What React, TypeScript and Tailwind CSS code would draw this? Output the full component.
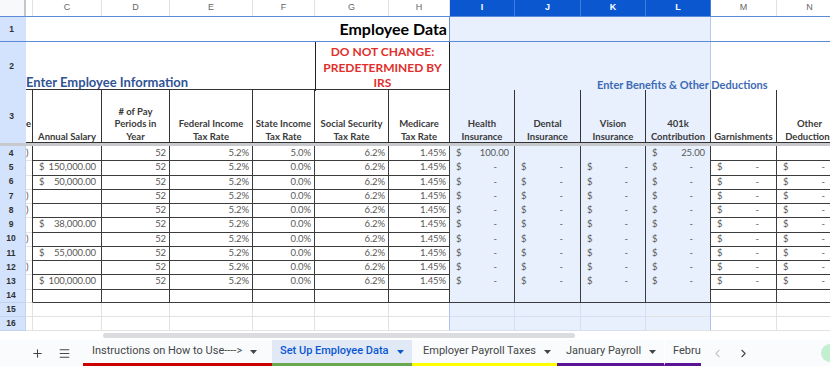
import { ChevronLeft, ChevronRight, Menu, Plus } from 'lucide-react';
import { type ReactNode } from 'react';

// column tracks: row numbers, B (partly shown), C..N
const COLS =
  'grid grid-cols-[26px_7px_69px_68px_83px_62px_74px_61px_65px_66px_65px_65px_66px_66px]';
const LETTERS = ['C', 'D', 'E', 'F', 'G', 'H', 'I', 'J', 'K', 'L', 'M', 'N'];
const isSel = (i: number) => i >= 6 && i <= 9;

const SALARIES: Record<number, string> = {
  5: '150,000.00',
  6: '50,000.00',
  9: '38,000.00',
  11: '55,000.00',
  13: '100,000.00',
};
const PAREN_ROWS = [4, 7, 8, 10, 12];

function RowNum({ n }: { n: number }) {
  return (
    <div className="flex items-center justify-center pr-[3px] bg-[#d3e3fd] border-r border-b border-[#c2d3ee] text-[8.5px] font-bold text-[#303030] font-['Liberation_Sans',sans-serif]">
      {n}
    </div>
  );
}

function Money({ v }: { v?: string }) {
  return (
    <div className="flex w-full justify-between pl-[6px] pr-[2px]">
      <span>$</span>
      {v ? <span>{v}</span> : <span className="mr-[12px]">-</span>}
    </div>
  );
}

function ColumnHeaders() {
  return (
    <div className={`${COLS} h-[16px] font-['Liberation_Sans',sans-serif] text-[9px]`}>
      <div className="bg-[#f8f9fa] border-r-2 border-[#c4c7c5]" />
      <div className="border-r border-[#e1e1e1]" />
      {LETTERS.map((l, i) => (
        <div
          key={l}
          className={
            isSel(i)
              ? 'flex items-center justify-center bg-[#0b57d0] text-white font-bold border-r border-[#3f7ce0]'
              : 'flex items-center justify-center text-[#666] border-r border-[#e1e1e1]'
          }
        >
          {l}
        </div>
      ))}
    </div>
  );
}

function Row1() {
  return (
    <div className={`${COLS} h-[26px] border-y border-[#5b8ad6]`}>
      <div className="bg-[#d3e3fd] flex items-center justify-center pr-[3px] text-[8.5px] font-bold text-[#303030] font-['Liberation_Sans',sans-serif]">
        1
      </div>
      <div className="col-span-7 flex items-center justify-end pr-[2px] border-r border-[#6f8fbf] text-[16px] font-bold text-black">
        Employee Data
      </div>
      <div className="col-span-4 bg-[#e8f0fe] border-r border-[#b5cbee]" />
      <div className="col-span-2" />
    </div>
  );
}

function Row2() {
  return (
    <div className={`${COLS} h-[48px] border-b border-[#333]`}>
      <div className="bg-[#d3e3fd] flex items-center justify-center pr-[3px] text-[8.5px] font-bold text-[#303030] font-['Liberation_Sans',sans-serif]">
        2
      </div>
      <div className="col-span-5 flex items-end text-[13px] leading-[17px] font-bold text-[#2f5496] whitespace-nowrap">
        Enter Employee Information
      </div>
      <div className="col-span-2 flex items-center justify-center pt-[2px] text-center border-x border-[#222] text-[12px] leading-[15.5px] font-bold text-[#e0302c]">
        DO NOT CHANGE:
        <br />
        PREDETERMINED BY
        <br />
        IRS
      </div>
      <div className="col-span-6 flex items-end pl-[147px] bg-[linear-gradient(to_right,#e8f0fe_260px,#b5cbee_260px,#b5cbee_261px,white_261px)] text-[11px] leading-[13px] font-bold text-[#3d6ab4] whitespace-nowrap">
        Enter Benefits &amp; Other Deductions
      </div>
    </div>
  );
}

const HEADERS: ReactNode[] = [
  'Annual Salary',
  <>
    # of Pay
    <br />
    Periods in
    <br />
    Year
  </>,
  <>
    Federal Income
    <br />
    Tax Rate
  </>,
  <>
    State Income
    <br />
    Tax Rate
  </>,
  <>
    Social Security
    <br />
    Tax Rate
  </>,
  <>
    Medicare
    <br />
    Tax Rate
  </>,
  <>
    Health
    <br />
    Insurance
  </>,
  <>
    Dental
    <br />
    Insurance
  </>,
  <>
    Vision
    <br />
    Insurance
  </>,
  <>
    401k
    <br />
    Contribution
  </>,
  'Garnishments',
  <>
    Other
    <br />
    Deductions
  </>,
];

function Row3() {
  return (
    <div className={`${COLS} h-[53px]`}>
      <div className="bg-[#d3e3fd] flex items-center justify-center pr-[3px] text-[8.5px] font-bold text-[#303030] font-['Liberation_Sans',sans-serif]">
        3
      </div>
      <div className="flex items-end pb-[11px] overflow-hidden border-r border-b border-[#333] text-[9.5px] font-bold text-[#333]">
        e
      </div>
      {HEADERS.map((h, i) => (
        <div
          key={i}
          className={`flex items-end justify-center overflow-hidden whitespace-nowrap text-center border-r border-b border-[#333] text-[9.5px] leading-[12.5px] font-bold text-[#3a3a3a] ${
            isSel(i) ? 'bg-[#e8f0fe]' : ''
          }`}
        >
          <div className="-mb-[1px]">{h}</div>
        </div>
      ))}
    </div>
  );
}

function cellValue(r: number, i: number): ReactNode {
  if (r > 13) return null;
  switch (i) {
    case 0:
      return SALARIES[r] ? <Money v={SALARIES[r]} /> : null;
    case 1:
      return '52';
    case 2:
      return '5.2%';
    case 3:
      return r === 4 ? '5.0%' : '0.0%';
    case 4:
      return '6.2%';
    case 5:
      return '1.45%';
    case 6:
      return r === 4 ? <Money v="100.00" /> : <Money />;
    case 9:
      return r === 4 ? <Money v="25.00" /> : <Money />;
    default:
      return r === 4 ? null : <Money />;
  }
}

function DataRow({ r }: { r: number }) {
  const boxed = r <= 14;
  return (
    <div className={`${COLS} h-[14.25px] text-[9.5px] tracking-[-0.1px] text-[#595959]`}>
      <RowNum n={r} />
      <div
        className={`flex items-center overflow-hidden border-r border-b ${
          boxed ? 'border-r-[#333] border-b-[#e2e2e2]' : 'border-[#e2e2e2]'
        }`}
      >
        {PAREN_ROWS.includes(r) ? ')' : ''}
      </div>
      {LETTERS.map((l, i) => {
        const sel = isSel(i);
        const border = boxed
          ? 'border-[#3c3c3c]'
          : i === 5 || i === 9
            ? 'border-r-[#a9c3ec] border-b-[#e2e2e2]'
            : sel
              ? 'border-[#d5dff0]'
              : 'border-[#e2e2e2]';
        return (
          <div
            key={l}
            className={`flex items-center justify-end pr-[3px] whitespace-nowrap border-r border-b ${border} ${
              sel ? 'bg-[#e8f0fe]' : ''
            }`}
          >
            {cellValue(r, i)}
          </div>
        );
      })}
    </div>
  );
}

function Caret({ color = '#444746' }: { color?: string }) {
  return (
    <svg width="7" height="4" viewBox="0 0 7 4" className="shrink-0">
      <path d="M0 0h7L3.5 4z" fill={color} />
    </svg>
  );
}

function Tabs() {
  return (
    <div className="h-[26px] flex items-stretch bg-[#f9fbfd] font-['Roboto',sans-serif] text-[11px] text-[#444746] overflow-hidden">
      <div className="w-[83px] shrink-0 flex items-center">
        <div className="w-[26px] ml-[24px] flex justify-center">
          <Plus size={13} strokeWidth={2} color="#444746" />
        </div>
        <div className="w-[20px] ml-[4px] flex justify-center">
          <Menu size={13} strokeWidth={2} color="#444746" />
        </div>
      </div>
      <div className="w-[618px] shrink-0 flex overflow-hidden">
        <div className="w-[189px] shrink-0 flex items-center gap-[8px] pl-[9px] border-b-[3px] border-[#cc0000] whitespace-nowrap">
          Instructions on How to Use----&gt;
          <Caret />
        </div>
        <div className="w-[140px] shrink-0 flex items-center gap-[8px] pl-[8px] bg-[#e1e9f7] text-[#0b57d0] font-medium border-b-[3px] border-[#6aa84f] whitespace-nowrap">
          Set Up Employee Data
          <Caret color="#0b57d0" />
        </div>
        <div className="w-[145px] shrink-0 flex items-center gap-[8px] pl-[11px] border-b-[3px] border-[#ffff00] whitespace-nowrap">
          Employer Payroll Taxes
          <Caret />
        </div>
        <div className="w-[108px] shrink-0 flex items-center gap-[8px] pl-[9px] border-b-[3px] border-[#5b1495] border-r border-r-white whitespace-nowrap">
          January Payroll
          <Caret />
        </div>
        <div className="w-[36px] shrink-0 flex items-center pl-[8px] border-b-[3px] border-[#5b1495] overflow-hidden whitespace-nowrap">
          February Payroll
        </div>
      </div>
      <div className="flex items-center gap-[13px] pl-[10px]">
        <ChevronLeft size={13} strokeWidth={2} color="#c4c7c5" />
        <ChevronRight size={13} strokeWidth={2} color="#444746" />
      </div>
      <div className="ml-auto mr-[-9px] self-center w-[18px] h-[18px] rounded-full bg-[#c4eed0]" />
    </div>
  );
}

export default function App() {
  const rows = Array.from({ length: 13 }, (_, k) => k + 4);
  return (
    <div className="w-[830px] h-[366px] overflow-hidden bg-white font-['Lato',sans-serif] flex flex-col">
      <div className="shrink-0 overflow-hidden">
        <ColumnHeaders />
        <Row1 />
        <Row2 />
        <Row3 />
        <div className="h-[3px] bg-[#c7c9cc]" />
        {rows.map((r) => (
          <DataRow key={r} r={r} />
        ))}
      </div>
      <div className="h-[9px] shrink-0 flex items-center pl-[103px]">
        <div className="w-[472px] h-[5px] rounded-full bg-[#dadce0]" />
      </div>
      <Tabs />
    </div>
  );
}
